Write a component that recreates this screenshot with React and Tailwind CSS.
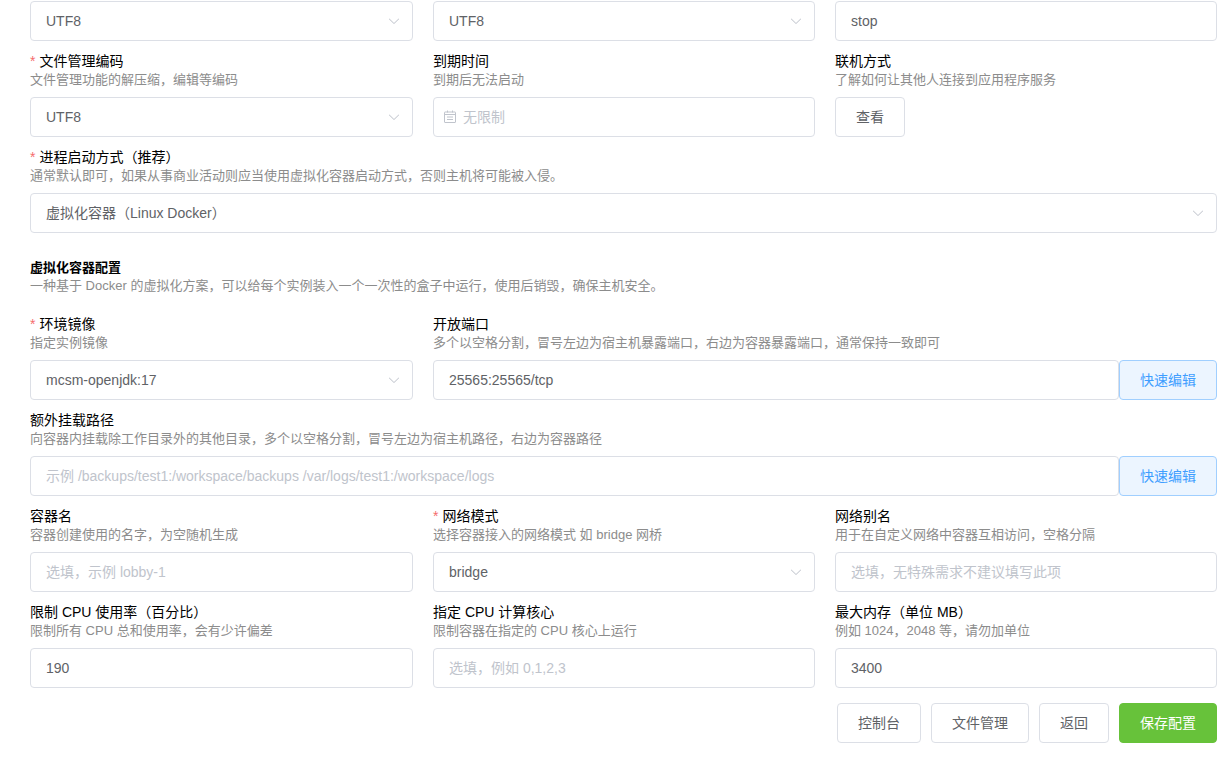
import React from 'react';

const FONT = 'font-["Liberation_Sans","Noto_Sans_CJK_SC",sans-serif]';

const Chevron = () => (
  <svg className="w-[14px] h-[14px] text-[#c0c4cc] shrink-0" viewBox="0 0 1024 1024" fill="currentColor">
    <path d="M831.872 340.864 512 652.672 192.128 340.864a30.592 30.592 0 0 0-42.752 0 29.12 29.12 0 0 0 0 41.6L489.664 714.24a32 32 0 0 0 44.672 0l340.288-331.712a29.12 29.12 0 0 0 0-41.728 30.592 30.592 0 0 0-42.752 0z" />
  </svg>
);

const Calendar = () => (
  <svg className="w-[14px] h-[14px] text-[#c0c4cc] shrink-0" viewBox="0 0 14 14" fill="none" stroke="currentColor" strokeWidth="1">
    <rect x="1.5" y="2" width="11" height="10.5" rx="0.5" />
    <path d="M4.5 0.5v2M9.5 0.5v2M1.5 4.5h11M4 7h6M4 9.5h6" />
  </svg>
);

const Label = ({ title, desc, required }) => (
  <div className="mb-[9px]">
    <div className="h-[18px] leading-[18px] text-sm text-black whitespace-nowrap">
      {required && <span className="text-[#f56c6c] mr-1">*</span>}
      {title}
    </div>
    <div className="h-[18px] leading-[19px] text-[13px] text-[#8c8c8c] whitespace-nowrap">{desc}</div>
  </div>
);

const Select = ({ value }) => (
  <div className="h-10 flex items-center justify-between pl-[15px] pr-[11px] bg-white border border-[#dcdfe6] rounded text-sm text-[#606266]">
    <span>{value}</span>
    <Chevron />
  </div>
);

const Input = ({ value, placeholder, className = '' }) => (
  <div className={`h-10 flex items-center px-[15px] bg-white border border-[#dcdfe6] rounded text-sm ${className}`}>
    {value ? <span className="text-[#606266]">{value}</span> : <span className="text-[#c0c4cc]">{placeholder}</span>}
  </div>
);

const Button = ({ children, className = 'bg-white border-[#dcdfe6] text-[#606266]' }) => (
  <button className={`h-10 px-5 border rounded text-sm ${className}`}>{children}</button>
);

const QuickInput = ({ value, placeholder }) => (
  <div className="flex">
    <Input value={value} placeholder={placeholder} className="flex-1" />
    <button className="w-[98px] h-10 shrink-0 border border-[#a0cfff] rounded bg-[#ecf5ff] text-sm text-[#409eff]">快速编辑</button>
  </div>
);

const Field = ({ title, desc, required, children, className = '' }) => (
  <div className={className}>
    <Label title={title} desc={desc} required={required} />
    {children}
  </div>
);

const gridClass = 'grid grid-cols-[383px_382px_382px] gap-x-5';
const rowClass = `${gridClass} mt-[11px]`;

const App = () => {
  return (
    <div className={`min-h-[758px] bg-white pl-[30px] pr-[10px] pt-px overflow-hidden ${FONT}`}>
      <div className={gridClass}>
        <Select value="UTF8" />
        <Select value="UTF8" />
        <Input value="stop" />
      </div>

      <div className={rowClass}>
        <Field title="文件管理编码" desc="文件管理功能的解压缩，编辑等编码" required>
          <Select value="UTF8" />
        </Field>
        <Field title="到期时间" desc="到期后无法启动">
          <div className="h-10 flex items-center gap-[6px] pl-[9px] bg-white border border-[#dcdfe6] rounded text-sm text-[#c0c4cc]">
            <Calendar />
            <span>无限制</span>
          </div>
        </Field>
        <Field title="联机方式" desc="了解如何让其他人连接到应用程序服务">
          <Button>查看</Button>
        </Field>
      </div>

      <div className="mt-[11px]">
        <Field title="进程启动方式（推荐）" desc="通常默认即可，如果从事商业活动则应当使用虚拟化容器启动方式，否则主机将可能被入侵。" required>
          <Select value="虚拟化容器（Linux Docker）" />
        </Field>
      </div>

      <div className="mt-[26px]">
        <div className="h-[18px] leading-[18px] text-[13px] font-bold text-black">虚拟化容器配置</div>
        <div className="h-[18px] leading-[18px] text-[13px] text-[#8c8c8c]">一种基于 Docker 的虚拟化方案，可以给每个实例装入一个一次性的盒子中运行，使用后销毁，确保主机安全。</div>
      </div>

      <div className={`${gridClass} mt-[20px]`}>
        <Field title="环境镜像" desc="指定实例镜像" required>
          <Select value="mcsm-openjdk:17" />
        </Field>
        <Field title="开放端口" desc="多个以空格分割，冒号左边为宿主机暴露端口，右边为容器暴露端口，通常保持一致即可" className="col-span-2">
          <QuickInput value="25565:25565/tcp" />
        </Field>
      </div>

      <div className="mt-[11px]">
        <Field title="额外挂载路径" desc="向容器内挂载除工作目录外的其他目录，多个以空格分割，冒号左边为宿主机路径，右边为容器路径">
          <QuickInput placeholder="示例 /backups/test1:/workspace/backups /var/logs/test1:/workspace/logs" />
        </Field>
      </div>

      <div className={rowClass}>
        <Field title="容器名" desc="容器创建使用的名字，为空随机生成">
          <Input placeholder="选填，示例 lobby-1" />
        </Field>
        <Field title="网络模式" desc="选择容器接入的网络模式 如 bridge 网桥" required>
          <Select value="bridge" />
        </Field>
        <Field title="网络别名" desc="用于在自定义网络中容器互相访问，空格分隔">
          <Input placeholder="选填，无特殊需求不建议填写此项" />
        </Field>
      </div>

      <div className={rowClass}>
        <Field title="限制 CPU 使用率（百分比）" desc="限制所有 CPU 总和使用率，会有少许偏差">
          <Input value="190" />
        </Field>
        <Field title="指定 CPU 计算核心" desc="限制容器在指定的 CPU 核心上运行">
          <Input placeholder="选填，例如 0,1,2,3" />
        </Field>
        <Field title="最大内存（单位 MB）" desc="例如 1024，2048 等，请勿加单位">
          <Input value="3400" />
        </Field>
      </div>

      <div className="flex justify-end gap-[10px] mt-[15px]">
        <Button>控制台</Button>
        <Button>文件管理</Button>
        <Button>返回</Button>
        <Button className="bg-[#67c23a] border-[#67c23a] text-white">保存配置</Button>
      </div>
    </div>
  );
};

export default App;
